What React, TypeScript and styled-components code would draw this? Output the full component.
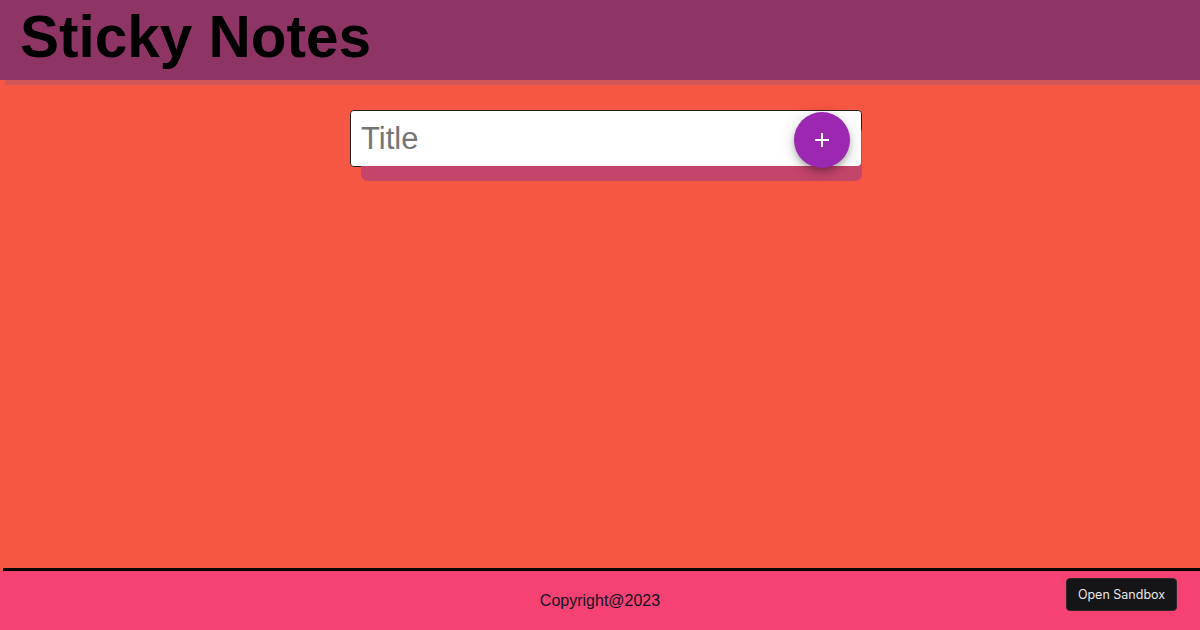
import styled, { createGlobalStyle } from 'styled-components'

const GlobalStyle = createGlobalStyle`
  html, body {
    margin: 0;
    padding: 0;
    height: 100%;
    background: #f65743;
    font-family: 'Liberation Sans', Arial, sans-serif;
  }
  #root {
    min-height: 100%;
  }
`

const Page = styled.div`
  min-height: 100vh;
  display: flex;
  flex-direction: column;
`

const Header = styled.header`
  height: 80px;
  background: #8e3566;
  box-shadow: 5px 5px 0 #d0565a;
  display: flex;
  align-items: center;
  padding-left: 20px;
`

const Heading = styled.h1`
  margin: 0;
  font-size: 58.5px;
  font-weight: 700;
  color: #000;
  line-height: 1;
  margin-top: -6px;
`

const Main = styled.main`
  flex: 1;
  display: flex;
  justify-content: center;
  align-items: flex-start;
  padding-top: 30px;
  padding-left: 12px;
`

const Form = styled.form`
  position: relative;
  z-index: 0;
  width: 512px;
  height: 57px;
  box-sizing: border-box;
  background: #fff;
  border: 1px solid #222;
  border-radius: 4px;

  &::before {
    content: '';
    position: absolute;
    z-index: -1;
    left: 10px;
    right: -1px;
    top: 14px;
    bottom: -15px;
    border-radius: 7px;
    background: #c4456a;
  }
`

const TitleInput = styled.input`
  position: relative;
  width: 100%;
  height: 100%;
  box-sizing: border-box;
  border: none;
  outline: none;
  border-radius: 4px;
  background: #fff;
  padding: 0 10px;
  font-family: 'Liberation Sans', Arial, sans-serif;
  font-size: 31px;
  color: #333;
  &::placeholder {
    color: #757575;
  }
`

const Fab = styled.button`
  position: absolute;
  top: 1px;
  right: 11px;
  width: 56px;
  height: 56px;
  border: none;
  border-radius: 50%;
  background: #9c27b0;
  display: flex;
  align-items: center;
  justify-content: center;
  cursor: pointer;
  box-shadow: 0px 3px 5px -1px rgba(0, 0, 0, 0.2),
    0px 6px 10px 0px rgba(0, 0, 0, 0.14), 0px 1px 18px 0px rgba(0, 0, 0, 0.12);
`

const Divider = styled.div`
  height: 3px;
  margin-left: 3px;
  background: #000;
`

const Footer = styled.footer`
  position: relative;
  height: 59px;
  background: #f64173;
  display: flex;
  align-items: center;
  justify-content: center;
`

const Copyright = styled.p`
  margin: 0;
  font-size: 16px;
  color: #111122;
`

const SandboxButton = styled.a`
  position: absolute;
  top: 7px;
  right: 23px;
  width: 111px;
  height: 33px;
  box-sizing: border-box;
  display: flex;
  align-items: center;
  justify-content: center;
  background: #151518;
  border: 1px solid #2a2a2e;
  border-radius: 4px;
  color: #e8e8e8;
  font-family: Inter, 'Liberation Sans', sans-serif;
  font-size: 12.5px;
  text-decoration: none;
`

const App = () => {
  return (
    <Page>
      <GlobalStyle />
      <Header>
        <Heading>Sticky Notes</Heading>
      </Header>
      <Main>
        <Form onSubmit={(e) => e.preventDefault()}>
          <TitleInput name="title" placeholder="Title" />
          <Fab type="submit">
            <svg width="16" height="16" viewBox="0 0 16 16">
              <path d="M8 1v14M1 8h14" stroke="#fff" strokeWidth="2" />
            </svg>
          </Fab>
        </Form>
      </Main>
      <Divider />
      <Footer>
        <Copyright>Copyright@2023</Copyright>
        <SandboxButton href="#">Open Sandbox</SandboxButton>
      </Footer>
    </Page>
  )
}

export default App
